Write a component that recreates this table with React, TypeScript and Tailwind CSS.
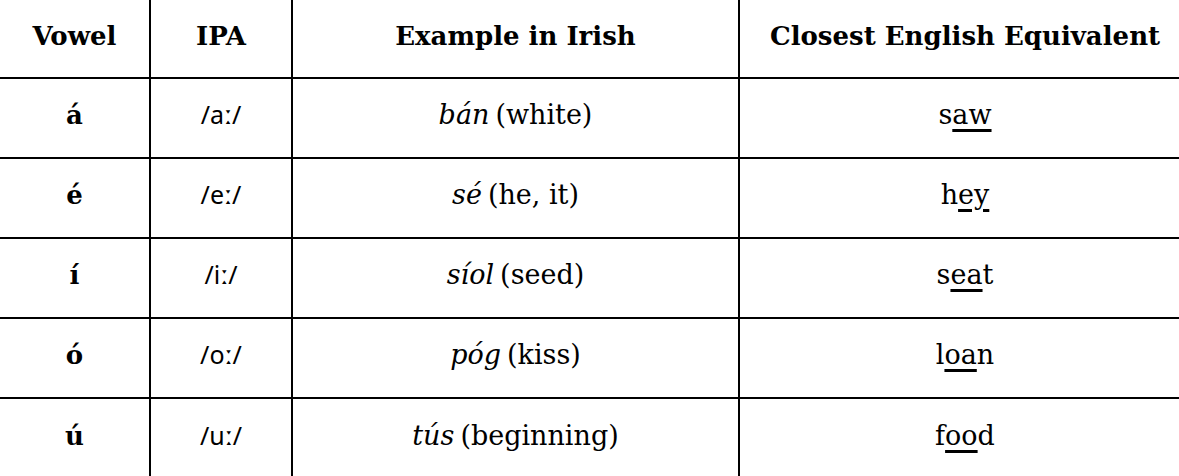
const rows = [
  { vowel: 'á', ipa: '/aː/', word: 'bán', gloss: '(white)', eng: ['s', 'aw', ''] },
  { vowel: 'é', ipa: '/eː/', word: 'sé', gloss: '(he, it)', eng: ['h', 'ey', ''] },
  { vowel: 'í', ipa: '/iː/', word: 'síol', gloss: '(seed)', eng: ['s', 'ea', 't'] },
  { vowel: 'ó', ipa: '/oː/', word: 'póg', gloss: '(kiss)', eng: ['l', 'oa', 'n'] },
  { vowel: 'ú', ipa: '/uː/', word: 'tús', gloss: '(beginning)', eng: ['f', 'oo', 'd'] },
]

const serif = "font-['DejaVu_Serif','Liberation_Serif',serif]"
const head = 'h-[79px] border-b-2 border-black flex items-center justify-center pb-[5px] font-bold text-[26px]'

export default function App() {
  return (
    <div className={`w-[1179px] h-[476px] overflow-hidden bg-white text-black ${serif}`}>
      {/* table runs a little past the right edge, as in the crop */}
      <div className="grid w-[1190px] grid-cols-[151px_142px_447px_450px]">
        <div className={`${head} border-r-2`}>Vowel</div>
        <div className={`${head} border-r-2`}>IPA</div>
        <div className={`${head} border-r-2`}>Example in Irish</div>
        <div className={head}>Closest English Equivalent</div>
        {rows.map((r, i) => {
          const last = i === rows.length - 1
          const cell = `h-[80px] ${last ? '' : 'border-b-2'} border-black flex items-center justify-center pb-[6px]`
          return (
            <div key={r.vowel} className="contents">
              <div className={`${cell} border-r-2 font-bold text-[26px]`}>{r.vowel}</div>
              <div className={`${cell} border-r-2 text-[25px] font-['Noto_Sans',sans-serif]`}>{r.ipa}</div>
              <div className={`${cell} border-r-2 text-[27px]`}>
                <span>
                  <em>{r.word}</em>
                  <span className="ml-[6px]">{r.gloss}</span>
                </span>
              </div>
              <div className={`${cell} text-[27px]`}>
                <span>
                  {r.eng[0]}
                  <span className="underline decoration-[3px] underline-offset-[5px]">{r.eng[1]}</span>
                  {r.eng[2]}
                </span>
              </div>
            </div>
          )
        })}
      </div>
    </div>
  )
}
